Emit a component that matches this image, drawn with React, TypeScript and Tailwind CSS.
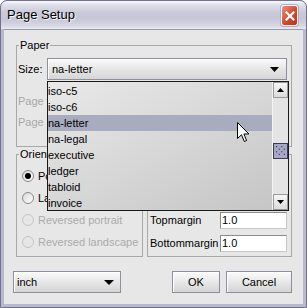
import React from "react";

const items = ["iso-c5", "iso-c6", "na-letter", "na-legal", "executive", "ledger", "tabloid", "invoice"];

function DownTri({ w = 9, h = 5 }: { w?: number; h?: number }) {
  return (
    <svg width={w} height={h} viewBox={`0 0 ${w} ${h}`}>
      <path d={`M0 0H${w}L${w / 2} ${h}Z`} fill="#000" />
    </svg>
  );
}

function UpTri({ w = 7, h = 4 }: { w?: number; h?: number }) {
  return (
    <svg width={w} height={h} viewBox={`0 0 ${w} ${h}`}>
      <path d={`M0 ${h}H${w}L${w / 2} 0Z`} fill="#000" />
    </svg>
  );
}

function Radio({ checked, disabled, label }: { checked?: boolean; disabled?: boolean; label: string }) {
  return (
    <div className="flex items-center h-[22px] pl-[5px]">
      <div
        className={
          "w-[12px] h-[12px] rounded-full border flex items-center justify-center " +
          (disabled
            ? "border-[#c4c4c4] bg-[#e6e6e6]"
            : "border-[#8a8a8a] bg-[linear-gradient(to_bottom_right,#d8d8d8,#ffffff)]")
        }
      >
        {checked && <div className="w-[6px] h-[6px] rounded-full bg-black" />}
      </div>
      <span className={"ml-[4px] whitespace-nowrap " + (disabled ? "text-[#ababab]" : "text-black")}>{label}</span>
    </div>
  );
}

function MarginRow({ label, value }: { label: string; value: string }) {
  return (
    <div className="flex items-center h-[17px]">
      <span className="w-[72px] pl-[2px] whitespace-nowrap">{label}</span>
      <div className="w-[67px] h-[17px] border border-[#8c8c8c] border-b-[#c8c8c8] border-r-[#c8c8c8] bg-white flex items-center pl-[1px] leading-none">
        {value}
      </div>
    </div>
  );
}

export default function App() {
  return (
    <div className="w-[307px] h-[308px] bg-[#b9b9cd] rounded-t-[7px] border border-[#72728e] flex flex-col font-['Liberation_Sans',Arial,sans-serif] text-[11px] text-black overflow-hidden">
      {/* Title bar */}
      <div className="h-[28px] shrink-0 flex items-start justify-between pl-[6px] pr-[8px] rounded-t-[6px] bg-[linear-gradient(to_bottom,#fafafd_0%,#e2e2ec_12%,#cacada_40%,#c6c6d6_65%,#d6d6e4_88%,#eaeaf2_100%)]">
        <span className="mt-[6px] text-[13px] leading-[16px] [text-shadow:1px_1px_0_#f4f4f8]">Page Setup</span>
        <div className="mt-[4px] w-[17px] h-[21px] rounded-[3px] border border-white bg-[linear-gradient(to_bottom_right,#f0907a,#d24a2c_55%,#b5321a)] flex items-center justify-center shadow-[0_0_0_1px_#b0b0c0]">
          <svg width="10" height="10" viewBox="0 0 10 10">
            <path d="M1.5 1.5L8.5 8.5M8.5 1.5L1.5 8.5" stroke="#fff" strokeWidth="2.2" strokeLinecap="square" />
          </svg>
        </div>
      </div>

      {/* Content */}
      <div className="flex-1 mx-[3px] mb-[3px] bg-[#e7e7e7] border-t border-[#9898b0] flex flex-col pl-[12px] pr-[11px]">
        {/* Paper */}
        <fieldset className="mt-[9px] border border-[#a8a8a8] pt-[6px] pb-[13px] px-0 min-w-0">
          <legend className="ml-[2px] px-[1px] leading-[13px]">Paper</legend>
          <div className="flex items-center h-[22px]">
            <span className="w-[30px] pl-[1px]">Size:</span>
            <div className="relative flex-1 mr-[4px] h-[22px]">
              <div className="h-full border border-[#8e8e9c] bg-[linear-gradient(to_bottom,#fbfbfb,#e6e6e6_50%,#d6d6d6)] flex items-center justify-between pl-[4px] pr-[7px] shadow-[inset_1px_1px_0_#ffffff]">
                <span>na-letter</span>
                <DownTri />
              </div>
              {/* Dropdown list */}
              <div className="absolute left-0 top-[23px] w-[242px] h-[130px] z-10 border border-[#1a1a1a] bg-[linear-gradient(to_bottom_right,#e9e9e9,#c4c4c4)] flex">
                <div className="flex-1 pt-[1px] flex flex-col">
                  {items.map((it) => (
                    <div
                      key={it}
                      className={"h-[16px] leading-[16px] pl-0 " + (it === "na-letter" ? "bg-[#a9abbf]" : "")}
                    >
                      {it}
                    </div>
                  ))}
                </div>
                <div className="w-[16px] flex flex-col bg-[#e4e4e4] border-l border-[#f4f4f4]">
                  <div className="h-[16px] border border-[#9a9a9a] bg-[linear-gradient(to_bottom,#f6f6f6,#dcdcdc)] flex items-center justify-center">
                    <UpTri />
                  </div>
                  <div className="h-[45px]" />
                  <div className="h-[16px] border border-[#3c3c4c] bg-[#a7a8c6] flex items-center justify-center">
                    <svg width="10" height="10" viewBox="0 0 10 10">
                      {[0, 1, 2, 3].map((r) =>
                        [0, 1, 2, 3].map((c) =>
                          (r + c) % 2 === 0 ? (
                            <rect key={`${r}-${c}`} x={c * 2.6} y={r * 2.6} width="1.2" height="1.2" fill="#3a3a56" />
                          ) : null
                        )
                      )}
                    </svg>
                  </div>
                  <div className="flex-1" />
                  <div className="h-[16px] border border-[#9a9a9a] bg-[linear-gradient(to_bottom,#f6f6f6,#dcdcdc)] flex items-center justify-center">
                    <DownTri w={7} h={4} />
                  </div>
                </div>
                {/* Mouse cursor */}
                <svg className="absolute left-[189px] top-[40px]" width="13" height="21" viewBox="0 0 13 21">
                  <path
                    d="M0.5 0.5V16.5L4.5 12.8L7.3 19.5L9.6 18.5L6.9 12H12Z"
                    fill="#fff"
                    stroke="#000"
                    strokeWidth="1"
                    strokeLinejoin="miter"
                  />
                </svg>
              </div>
            </div>
          </div>
          <div className="mt-[11px] h-[21px] flex items-center pl-[1px] text-[#a8a8a8]">Page width</div>
          <div className="h-[21px] flex items-center pl-[1px] text-[#a8a8a8]">Page height</div>
        </fieldset>

        {/* Orientation + Margins */}
        <div className="mt-[1px] flex gap-[4px]">
          <fieldset className="w-[127px] border border-[#a8a8a8] pt-[4px] pb-[3px] px-0 min-w-0">
            <legend className="ml-[2px] px-[1px] leading-[13px]">Orientation</legend>
            <Radio checked label="Portrait" />
            <Radio label="Landscape" />
            <Radio disabled label="Reversed portrait" />
            <Radio disabled label="Reversed landscape" />
          </fieldset>
          <fieldset className="flex-1 border border-[#a8a8a8] pt-[5px] pb-[4px] px-0 min-w-0 flex flex-col gap-[6px]">
            <legend className="ml-[2px] px-[1px] leading-[13px]">Margins</legend>
            <MarginRow label="Leftmargin" value="1.0" />
            <MarginRow label="Rightmargin" value="1.0" />
            <MarginRow label="Topmargin" value="1.0" />
            <MarginRow label="Bottommargin" value="1.0" />
          </fieldset>
        </div>

        {/* Bottom row */}
        <div className="mt-[14px] flex items-center -ml-[3px]">
          <div className="w-[108px] h-[22px] border border-[#8e8e9c] bg-[linear-gradient(to_bottom,#fbfbfb,#e6e6e6_50%,#d4d4d4)] flex items-center justify-between pl-[3px] pr-[6px] shadow-[inset_1px_1px_0_#ffffff]">
            <span>inch</span>
            <DownTri w={10} h={5} />
          </div>
          <div className="flex-1" />
          <button className="w-[48px] h-[22px] border border-[#8e8e9c] bg-[linear-gradient(to_bottom,#fbfbfb,#e8e8e8_50%,#d4d4d4)] shadow-[inset_1px_1px_0_#ffffff] flex items-center justify-center">
            OK
          </button>
          <button className="ml-[6px] w-[66px] h-[22px] border border-[#8e8e9c] bg-[linear-gradient(to_bottom,#fbfbfb,#e8e8e8_50%,#d4d4d4)] shadow-[inset_1px_1px_0_#ffffff] flex items-center justify-center">
            Cancel
          </button>
        </div>
      </div>
    </div>
  );
}
